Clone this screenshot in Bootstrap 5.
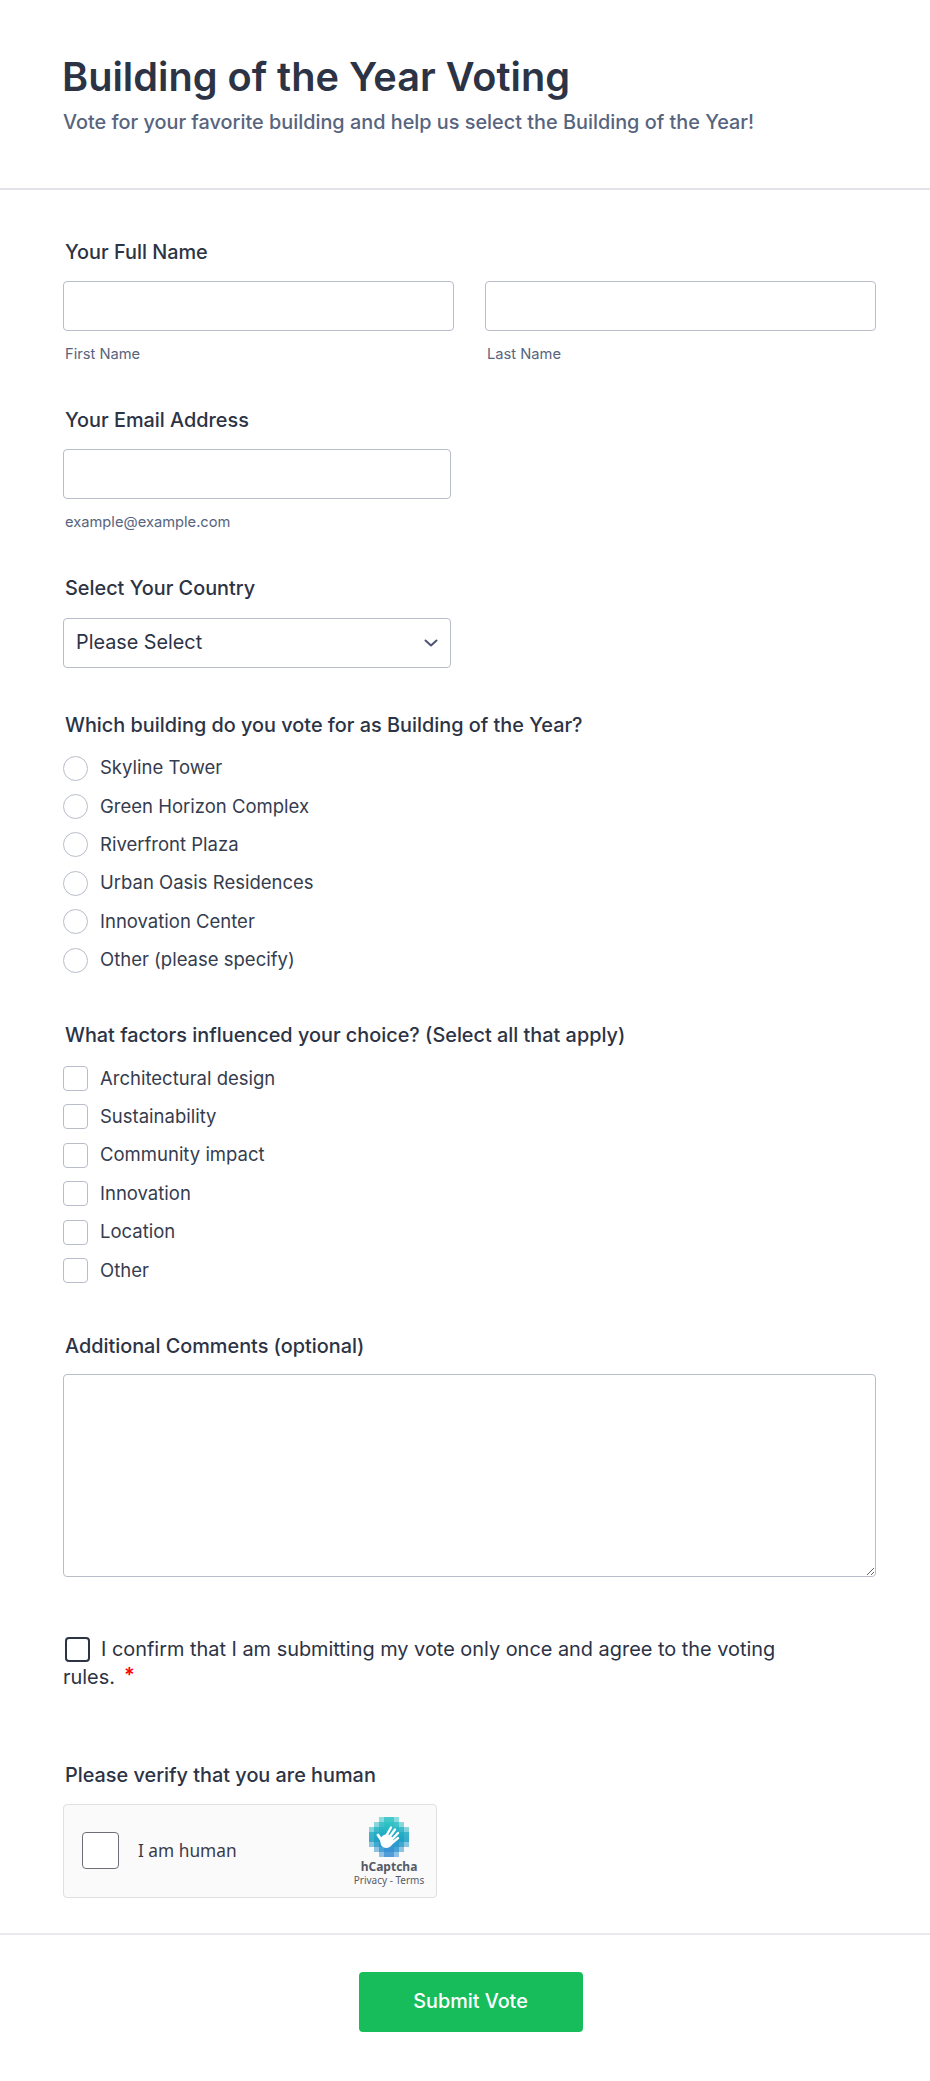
<!doctype html>
<html lang="en"><head><meta charset="utf-8">
<link href="https://cdn.jsdelivr.net/npm/bootstrap@5.3.0/dist/css/bootstrap.min.css" rel="stylesheet">
<style>
body{font-family:Inter,"Liberation Sans",sans-serif;color:#2c3345;background:#fff;font-size:18px}
.vf-head{padding:53px 63px 54px 62px;border-bottom:2px solid #e2e3e8}
.vf-title{font-size:39.7px;font-weight:600;line-height:48px;margin:0 0 9px;color:#2c3345}
.vf-sub{font-size:19.85px;line-height:24px;color:#57647e;margin:0 0 0 1px;font-weight:500}
.vf-body{padding:0 54px 0 63px}
.vf-label{font-size:19.85px;font-weight:500;line-height:24px;padding-left:2px;margin:0 0 17px;display:block;color:#2c3345}
.vf-label-tight{margin-bottom:12px}
.vf-label-area{margin-bottom:16px}
.vf-label-select{margin-bottom:18px}
.vf-help{font-size:14.7px;line-height:18px;color:#57647e;padding-left:2px;margin-top:14px}
.vf-input{height:50px;border:1px solid #b8bdc9;border-radius:4px;width:100%;display:block;box-shadow:none}
.vf-half{width:388px}
.vf-wide{width:391px}
.vf-select{font-size:19.8px;color:#2c3345;padding-left:12px;background-image:url("data:image/svg+xml,%3Csvg xmlns='http://www.w3.org/2000/svg' viewBox='0 0 14 8'%3E%3Cpath d='M1.5 1.5 7 6.5l5.5-5' fill='none' stroke='%234d5670' stroke-width='2' stroke-linecap='round' stroke-linejoin='round'/%3E%3C/svg%3E");background-position:right 12px center;background-size:14px 8px}
.vf-opt{height:38.4px;display:flex;align-items:center;gap:12px;font-size:18.5px;color:#353c4e;margin:0}
.vf-opt input{appearance:none;width:25px;height:25px;border:1px solid #b8bdc9;background:#fff;margin:0;flex:none}
.vf-round{border-radius:50%}
.vf-sq{border-radius:4px}
.vf-area{height:203px;width:100%;border:1px solid #b8bdc9;border-radius:4px;display:block}
.vf-confirm{font-size:19.9px;line-height:26px;margin:0}
.vf-confirm input{appearance:none;width:25px;height:25px;border:2px solid #2c3345;border-radius:4px;vertical-align:-6px;margin:0 11px 0 2px;background:#fff}
.vf-req{color:#f00;font-weight:600;margin-left:9px;vertical-align:2px}
.vf-cap{width:374px;height:94px;background:#fafafa;border:1px solid #e0e0e0;border-radius:4px;display:flex;align-items:center;font-family:"Noto Sans",sans-serif;padding:0 9px 0 18px}
.vf-cap-box{width:37px;height:37px;border:1.5px solid #6e6e78;border-radius:4px;background:#fff;flex:none}
.vf-cap-text{font-size:17.3px;color:#3a3a4a;margin-left:19px;flex:1}
.vf-cap-brand{width:76px;text-align:center;line-height:1;margin-top:2px;white-space:nowrap}
.vf-cap-name{font-size:12px;font-weight:700;color:#555a66;line-height:14px;margin-top:3px}
.vf-cap-link{font-size:10px;color:#555a66;line-height:13px}
.vf-cap-logo{display:block;margin:0 auto}
.vf-foot{border-top:2px solid #e9eaf0;margin-top:35px;padding:37px 0 50px 11px;text-align:center}
.vf-btn{width:224px;height:60px;background:#18bd5b;border:0;border-radius:4px;color:#fff;font-weight:500;font-size:19.8px}
.gap-first{margin-top:50px}
.sec-a{margin-top:45px}
.sec-c{margin-top:44px}
.sec-f{margin-top:44px}
.sec-d{margin-top:59px}
.sec-e{margin-top:73px}
</style></head><body>
<header class="vf-head">
<h1 class="vf-title">Building of the Year Voting</h1>
<p class="vf-sub">Vote for your favorite building and help us select the Building of the Year!</p>
</header>
<form class="vf-body">
<div class="gap-first">
<label class="vf-label">Your Full Name</label>
<div class="d-flex justify-content-between">
<div class="vf-wide"><input class="vf-input form-control"><div class="vf-help">First Name</div></div>
<div class="vf-wide"><input class="vf-input form-control"><div class="vf-help">Last Name</div></div>
</div></div>
<div class="sec-a">
<label class="vf-label">Your Email Address</label>
<input class="vf-input form-control vf-half"><div class="vf-help">example@example.com</div></div>
<div class="sec-a">
<label class="vf-label vf-label-select">Select Your Country</label>
<select class="vf-input form-select vf-half vf-select"><option>Please Select</option></select></div>
<div class="sec-a">
<label class="vf-label vf-label-tight">Which building do you vote for as Building of the Year?</label>
<label class="vf-opt"><input type="radio" class="vf-round">Skyline Tower</label>
<label class="vf-opt"><input type="radio" class="vf-round">Green Horizon Complex</label>
<label class="vf-opt"><input type="radio" class="vf-round">Riverfront Plaza</label>
<label class="vf-opt"><input type="radio" class="vf-round">Urban Oasis Residences</label>
<label class="vf-opt"><input type="radio" class="vf-round">Innovation Center</label>
<label class="vf-opt"><input type="radio" class="vf-round">Other (please specify)</label>
</div>
<div class="sec-c">
<label class="vf-label vf-label-tight">What factors influenced your choice? (Select all that apply)</label>
<label class="vf-opt"><input type="checkbox" class="vf-sq">Architectural design</label>
<label class="vf-opt"><input type="checkbox" class="vf-sq">Sustainability</label>
<label class="vf-opt"><input type="checkbox" class="vf-sq">Community impact</label>
<label class="vf-opt"><input type="checkbox" class="vf-sq">Innovation</label>
<label class="vf-opt"><input type="checkbox" class="vf-sq">Location</label>
<label class="vf-opt"><input type="checkbox" class="vf-sq">Other</label>
</div>
<div class="sec-f">
<label class="vf-label vf-label-area">Additional Comments (optional)</label>
<textarea class="vf-area form-control"></textarea></div>
<div class="sec-d">
<p class="vf-confirm"><input type="checkbox">I confirm that I am submitting my vote only once and agree to the voting<br>rules.<span class="vf-req">*</span></p></div>
<div class="sec-e">
<label class="vf-label">Please verify that you are human</label>
<div class="vf-cap"><div class="vf-cap-box"></div><div class="vf-cap-text">I am human</div>
<div class="vf-cap-brand"><svg class="vf-cap-logo" width="40" height="40" viewBox="0 0 40 40">
<defs><linearGradient id="vf-g" x1="0" y1="0" x2="0" y2="1"><stop offset="0" stop-color="#30c6c4"/><stop offset=".55" stop-color="#1fa3c4"/><stop offset="1" stop-color="#3f8fd6"/></linearGradient></defs>
<path d="M10 0h20v5h5v5h5v20h-5v5h-5v5H10v-5H5v-5H0V10h5V5h5z" fill="url(#vf-g)" opacity=".55"/>
<path d="M15 0h10v5h5v5h5v5h5v10h-5v5h-5v5h-5v5H15v-5h-5v-5H5v-5H0V15h5v-5h5V5h5z" fill="url(#vf-g)" opacity=".75"/>
<path d="M15 5h10v5h5v5h5v10h-5v5h-5v5H15v-5h-5v-5H5V15h5v-5h5z" fill="url(#vf-g)"/>
<g stroke="#fff" stroke-linecap="round" fill="none" stroke-width="2.4"><path d="M16 21l6-10.500"/><path d="M19 22l7-9.500"/><path d="M21.500 24l7.500-8"/><path d="M23 26l6-5"/><path d="M13 24l-4-6" stroke-width="2.800"/></g>
<path d="M11 23c1-5 7-7 11-4 3 3 3 7 0 10-3 3-8 2.500-10-1z" fill="#fff"/>
</svg><div class="vf-cap-name">hCaptcha</div><div class="vf-cap-link">Privacy - Terms</div></div></div>
</div>
</form>
<footer class="vf-foot"><button class="vf-btn btn" type="button">Submit Vote</button></footer>
<script src="https://cdn.jsdelivr.net/npm/bootstrap@5.3.0/dist/js/bootstrap.bundle.min.js"></script>
</body></html>
